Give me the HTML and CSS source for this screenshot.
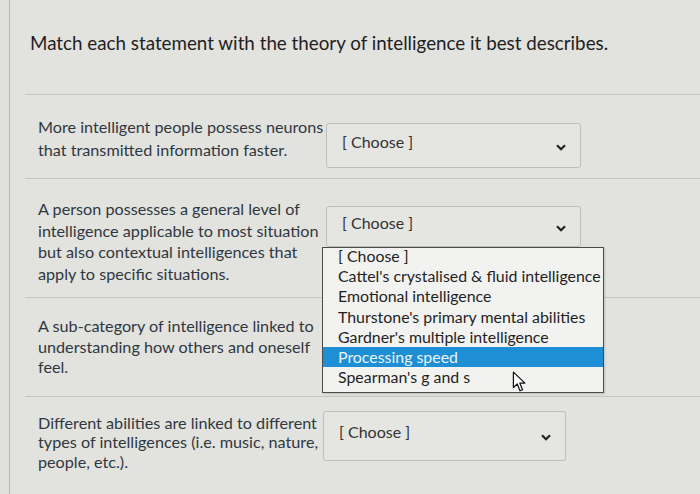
FILE: index.html
```html
<!DOCTYPE html>
<html lang="en">
<head>
<meta charset="utf-8">
<title>Matching question</title>
<link rel="stylesheet" href="styles.css">
</head>
<body>
<div class="frame">
  <h1 class="title">Match each statement with the theory of intelligence it best describes.</h1>
  <div class="rows">
    <div class="row row1">
      <div class="statement">More intelligent people possess neurons that transmitted information faster.</div>
      <div class="select"><span>[ Choose ]</span><svg class="chev" width="10" height="7" viewBox="0 0 10 7"><path d="M1 1.2 L5 5.2 L9 1.2" fill="none" stroke="#222" stroke-width="2.2"/></svg></div>
    </div>
    <div class="row row2">
      <div class="statement">A person possesses a general level of intelligence applicable to most situation but also contextual intelligences that apply to specific situations.</div>
      <div class="select short"><span>[ Choose ]</span><svg class="chev" width="10" height="7" viewBox="0 0 10 7"><path d="M1 1.2 L5 5.2 L9 1.2" fill="none" stroke="#222" stroke-width="2.2"/></svg></div>
    </div>
    <div class="row row3">
      <div class="statement">A sub-category of intelligence linked to understanding how others and oneself feel.</div>
      <div class="select"><span>[ Choose ]</span></div>
    </div>
    <div class="row row4">
      <div class="statement">Different abilities are linked to different types of intelligences (i.e. music, nature, people, etc.).</div>
      <div class="select"><span>[ Choose ]</span><svg class="chev" width="10" height="7" viewBox="0 0 10 7"><path d="M1 1.2 L5 5.2 L9 1.2" fill="none" stroke="#222" stroke-width="2.2"/></svg></div>
    </div>
  </div>
  <ul class="listbox">
    <li>[ Choose ]</li>
    <li>Cattel's crystalised &amp; fluid intelligence</li>
    <li>Emotional intelligence</li>
    <li>Thurstone's primary mental abilities</li>
    <li>Gardner's multiple intelligence</li>
    <li class="active">Processing speed</li>
    <li>Spearman's g and s</li>
  </ul>
  <svg class="cursor" width="16" height="22" viewBox="0 0 14 20"><path d="M1 1 L1 15 L4.5 11.8 L7 18 L9.3 17 L6.8 11 L11.5 11 Z" fill="#fff" stroke="#111" stroke-width="1.1" stroke-linejoin="round"/></svg>
</div>
</body>
</html>
```
FILE: styles.css
```css
html, body {
  margin: 0;
  padding: 0;
}
body {
  background: #e0e0dd;
  font-family: Lato, "Open Sans", "Liberation Sans", sans-serif;
  color: #2d3b45;
  width: 700px;
  height: 494px;
  overflow: hidden;
}
.frame {
  position: relative;
  margin-left: 9px;
  border-left: 1px solid #b4b4b0;
  height: 494px;
  padding: 0 0 0 15px;
  background: #e2e2df;
}
.title {
  margin: 0;
  padding: 30px 0 0 5px;
  font-size: 18.8px;
  font-weight: 400;
  line-height: 26px;
  color: #1e1e1e;
  height: 64px;
}
.rows {
  border-top: 1px solid #c6c6c2;
}
.row {
  display: flex;
  align-items: flex-start;
  padding-left: 13px;
  border-bottom: 1px solid #c6c6c2;
}
.row4 { border-bottom: none; }
.statement {
  width: 288px;
  font-size: 16.2px;
  line-height: 21.5px;
  color: #2f3840;
}
.row1 { padding-top: 21px; padding-bottom: 10px; }
.row1 .statement { line-height: 22.5px; }
.row2 { padding-top: 19px; padding-bottom: 13px; }
.row3 { padding-top: 18px; padding-bottom: 18px; }
.row3 .statement { line-height: 20.5px; }
.row4 { padding-top: 16px; }
.row4 .statement { line-height: 19.5px; }
.select {
  margin-top: 7px;
  width: 255px;
  height: 45px;
  box-sizing: border-box;
  border: 1px solid #bdbdb9;
  border-radius: 3px;
  background: #e5e5e2;
  display: flex;
  align-items: center;
  justify-content: space-between;
  padding: 0 14px 0 15px;
  font-size: 16px;
  color: #333;
}
.select span { margin-top: -8px; }
.select.short { height: 41px; margin-top: 8px; }
.row4 .select { width: 243px; height: 50px; margin-left: -3px; margin-top: -2px; }
.chev { margin-top: 4px; }
.listbox {
  position: absolute;
  left: 312px;
  top: 247px;
  width: 280px;
  margin: 0;
  padding: 0 0 5px 0;
  list-style: none;
  background: #f2f2f0;
  border: 1px solid #4a4a4a;
  font-size: 15.9px;
  line-height: 20.2px;
  color: #1f1f1f;
  box-shadow: 1px 1px 2px rgba(0,0,0,0.15);
}
.listbox li {
  padding-left: 15px;
  white-space: nowrap;
}
.listbox li:first-child { margin-top: -2px; }
.listbox li.active {
  background: #1e8fd4;
  color: #eaf4fb;
}
.cursor {
  position: absolute;
  left: 502px;
  top: 371px;
}
```
